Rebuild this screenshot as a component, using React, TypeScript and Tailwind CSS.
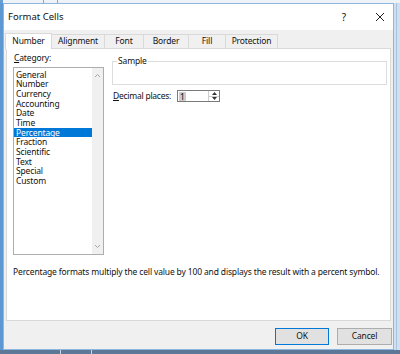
import React from "react";

const categories = [
  "General",
  "Number",
  "Currency",
  "Accounting",
  "Date",
  "Time",
  "Percentage",
  "Fraction",
  "Scientific",
  "Text",
  "Special",
  "Custom",
];

const tabs = [
  { label: "Number", w: "w-[47px]" },
  { label: "Alignment", w: "w-[53px]" },
  { label: "Font", w: "w-[39px]" },
  { label: "Border", w: "w-[45px]" },
  { label: "Fill", w: "w-[37px]" },
  { label: "Protection", w: "w-[52px]" },
];

const Chevron: React.FC<{ down?: boolean }> = ({ down }) => (
  <svg width="7" height="5" viewBox="0 0 7 5" className={down ? "rotate-180" : ""}>
    <path d="M1 4 L3.5 1.5 L6 4" fill="none" stroke="#a6a6a6" strokeWidth="1" />
  </svg>
);

const App: React.FC = () => {
  return (
    <div className="w-[400px] h-[354px] flex flex-col bg-[#e4ecf4] overflow-hidden font-['Noto_Sans',sans-serif] text-[8.5px] tracking-[-0.15px] text-[#111]">
      {/* spreadsheet peeking above */}
      <div className="h-[3px] flex bg-[#eef3f8]">
        <div className="w-[3px] bg-[#6b9fd3]" />
        <div className="ml-[40px] w-[1px] bg-[#9aa4ae]" />
        <div className="ml-[13px] w-[1px] bg-[#9aa4ae]" />
      </div>

      <div className="flex">
        <div className="w-[3px] h-[347px] bg-[#5d98d2]" />

        {/* dialog */}
        <div className="w-[391px] h-[347px] border border-[#8fb6de] bg-[#f0f0f0] flex flex-col">
          {/* title bar */}
          <div className="h-[26px] bg-white flex items-center">
            <span className="ml-[4px] text-[9.5px] tracking-normal">Format Cells</span>
            <span className="ml-auto mr-[29px] text-[10px]">?</span>
            <svg width="10" height="10" viewBox="0 0 10 10" className="mr-[8px]">
              <path d="M1 1 L9 9 M9 1 L1 9" stroke="#222" strokeWidth="1" />
            </svg>
          </div>

          {/* tabs */}
          <div className="mt-[2px] h-[16px] flex items-end pl-[1px]">
            {tabs.map((t, i) =>
              i === 0 ? (
                <div
                  key={t.label}
                  className={`${t.w} h-[16px] bg-white border border-b-0 border-[#d9d9d9] flex items-center justify-center relative z-10 -mb-[1px] pb-[1px]`}
                >
                  {t.label}
                </div>
              ) : (
                <div
                  key={t.label}
                  className={`${t.w} h-[14px] bg-[#f0f0f0] border-t border-r border-[#d9d9d9] flex items-center justify-center`}
                >
                  {t.label}
                </div>
              )
            )}
          </div>

          {/* tab panel */}
          <div className="ml-[2px] w-[385px] h-[273px] bg-white border border-[#d9d9d9] flex flex-col">
            <div className="flex pl-[6px] pt-[4px]">
              {/* category column */}
              <div className="flex flex-col">
                <div className="ml-[1px] h-[10px] leading-[10px]">
                  <span className="underline">C</span>ategory:
                </div>
                <div className="mt-[4px] w-[91px] h-[188px] border border-[#adadad] flex">
                  <div className="flex-1 pt-[1.5px]">
                    {categories.map((c) => (
                      <div
                        key={c}
                        className={`h-[9.7px] leading-[9.7px] pl-[2px] ${
                          c === "Percentage" ? "bg-[#0078d7] text-white" : ""
                        }`}
                      >
                        {c}
                      </div>
                    ))}
                  </div>
                  <div className="w-[11px] bg-[#f0f0f0] flex flex-col items-center justify-between py-[5px]">
                    <Chevron />
                    <Chevron down />
                  </div>
                </div>
              </div>

              {/* right column */}
              <div className="ml-[8px] flex flex-col">
                <fieldset className="w-[275px] h-[29px] border border-[#dcdcdc] mt-[3px]">
                  <legend className="ml-[4px] px-[1px] leading-[10px]">Sample</legend>
                </fieldset>
                <div className="mt-[5px] flex items-center h-[12px]">
                  <span className="ml-[1px] w-[64px] tracking-[-0.25px]">
                    <span className="underline">D</span>ecimal places:
                  </span>
                  <div className="w-[43px] h-[12px] border border-[#7a7a7a] flex">
                    <div className="flex-1 flex items-center pl-[1px]">
                      <span className="bg-[#cccccc] px-[1px] leading-[9px]">1</span>
                    </div>
                    <div className="w-[11px] border-l border-[#cfcfcf] flex flex-col">
                      <div className="flex-1 flex items-center justify-center border-b border-[#cfcfcf]">
                        <svg width="5" height="3" viewBox="0 0 5 3">
                          <path d="M0 3 L2.5 0 L5 3 Z" fill="#333" />
                        </svg>
                      </div>
                      <div className="flex-1 flex items-center justify-center">
                        <svg width="5" height="3" viewBox="0 0 5 3">
                          <path d="M0 0 L2.5 3 L5 0 Z" fill="#333" />
                        </svg>
                      </div>
                    </div>
                  </div>
                </div>
              </div>
            </div>

            <div className="mt-[12px] pl-[6px] leading-[10px] whitespace-nowrap tracking-[-0.15px]">
              Percentage formats multiply the cell value by 100 and displays the result with a percent symbol.
            </div>
          </div>

          {/* buttons */}
          <div className="mt-[7px] flex justify-end pr-[1px] gap-[8px]">
            <button className="w-[54px] h-[17px] bg-[#e1e1e1] border border-[#0078d7] flex items-center justify-center">
              OK
            </button>
            <button className="w-[55px] h-[17px] bg-[#e1e1e1] border border-[#adadad] flex items-center justify-center">
              Cancel
            </button>
          </div>
        </div>

        <div className="flex-1 h-[347px] bg-[#cfe0f1] flex">
          <div className="ml-[2px] w-[1px] bg-[#a9c4e0]" />
        </div>
      </div>

      <div className="flex-1 bg-[#5c7896] flex">
        <div className="ml-[60px] w-[1px] bg-[#c9d6e2]" />
        <div className="ml-[30px] w-[1px] bg-[#c9d6e2]" />
      </div>
    </div>
  );
};

export default App;
